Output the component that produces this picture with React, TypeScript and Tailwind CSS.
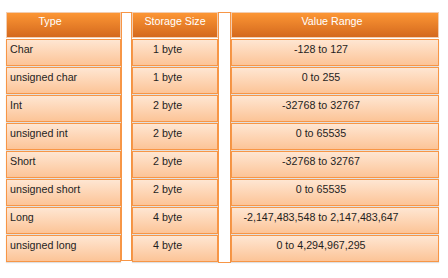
import React from "react";

const rows = [
  ["Char", "1 byte", "-128 to 127"],
  ["unsigned char", "1 byte", "0 to 255"],
  ["Int", "2 byte", "-32768 to 32767"],
  ["unsigned int", "2 byte", "0 to 65535"],
  ["Short", "2 byte", "-32768 to 32767"],
  ["unsigned short", "2 byte", "0 to 65535"],
  ["Long", "4 byte", "-2,147,483,548 to 2,147,483,647"],
  ["unsigned long", "4 byte", "0 to 4,294,967,295"],
];

const headCls =
  "h-[26px] border border-[#f3cdb0] bg-gradient-to-b from-[#fc9634] to-[#d4691e] text-white pt-[2px] leading-[13px]";
const cellCls =
  "h-[27px] border border-[#f79646] bg-gradient-to-b from-[#fee6d2] to-[#fcc497] text-[#1e1e1e] pt-[3px] leading-[13px] shadow-[0_1px_1px_rgba(0,0,0,0.12)]";

function Column({
  title,
  width,
  idx,
  headPad,
  cellPad,
}: {
  title: string;
  width: string;
  idx: number;
  headPad: string;
  cellPad: string;
}) {
  return (
    <div className={`flex flex-col gap-px ${width}`}>
      <div className={`${headCls} ${headPad}`}>{title}</div>
      {rows.map((r, i) => (
        <div key={i} className={`${cellCls} ${cellPad}`}>
          {r[idx]}
        </div>
      ))}
    </div>
  );
}

export default function App() {
  return (
    <div
      className="w-[448px] h-[278px] bg-white pt-[12px] pl-[6px] text-[10.7px]"
      style={{ fontFamily: '"Liberation Sans", Arial, sans-serif' }}
    >
      <div className="flex items-start">
        <Column
          title="Type"
          width="w-[115px]"
          idx={0}
          headPad="text-center pr-[27px]"
          cellPad="pl-[3px]"
        />
        <div className="w-[11px] h-[249px] border border-[#f79646] bg-white" />
        <Column
          title="Storage Size"
          width="w-[86px]"
          idx={1}
          headPad="text-center"
          cellPad="pl-[20px]"
        />
        <div className="w-[13px] h-[251px] border border-[#f79646] bg-white" />
        <Column
          title="Value Range"
          width="w-[208px]"
          idx={2}
          headPad="text-center pr-[6px]"
          cellPad="text-center pr-[28px]"
        />
      </div>
    </div>
  );
}
